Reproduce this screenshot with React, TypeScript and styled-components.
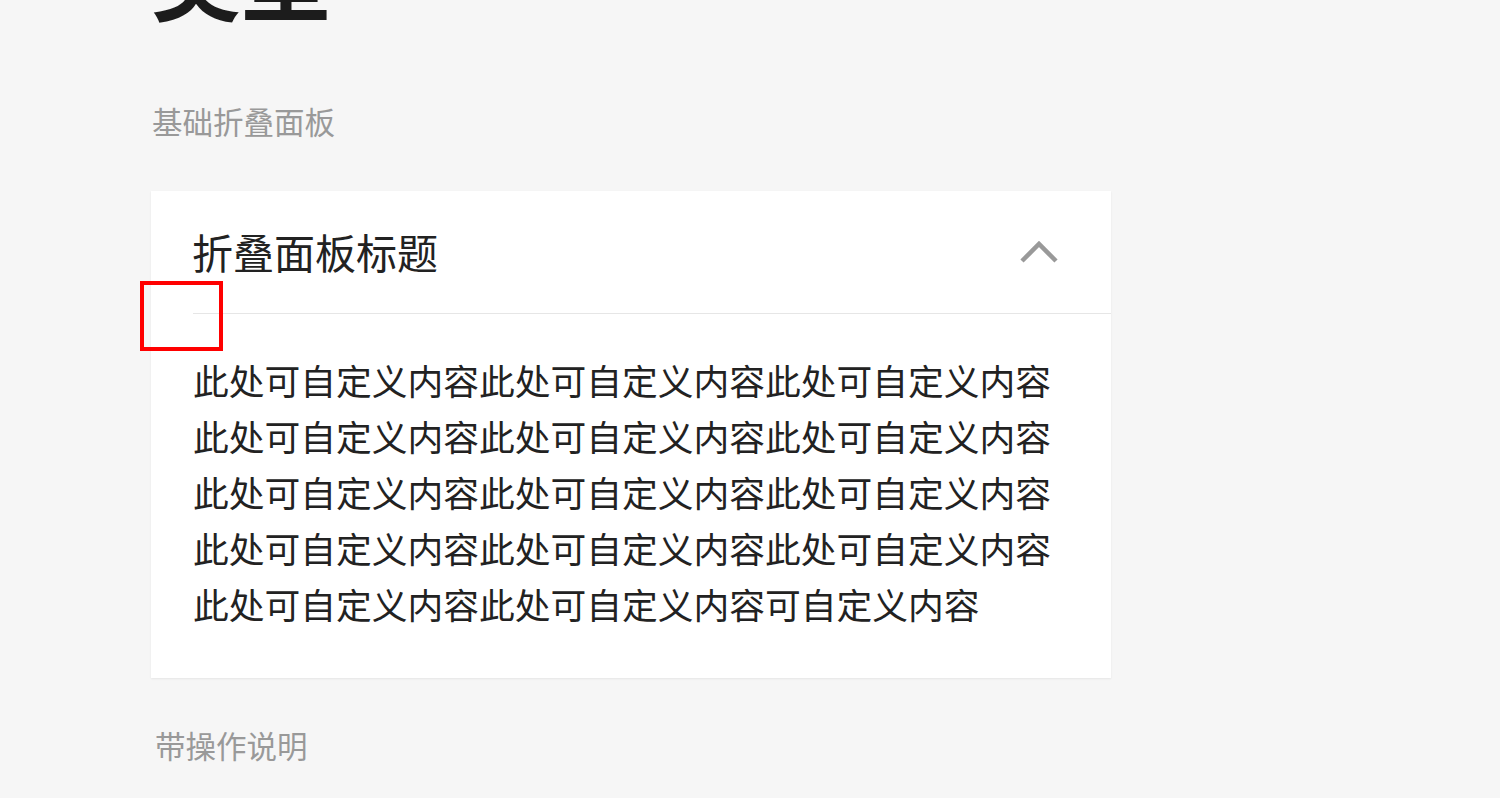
import * as React from 'react';
import styled, { createGlobalStyle } from 'styled-components';

const GlobalStyle = createGlobalStyle`
  html, body {
    margin: 0;
    padding: 0;
    background: #f6f6f6;
    font-family: "Noto Sans CJK SC", "Noto Sans", sans-serif;
  }
`;

const Page = styled.div`
  padding: 0 389px 0 151px;
  overflow: hidden;
  height: 798px;
  box-sizing: border-box;
`;

const PageTitle = styled.h1`
  margin: -70px 0 0;
  font-size: 90px;
  line-height: 1;
  font-weight: 700;
  color: #1c1c1c;
`;

const SectionLabel = styled.div<{ $top: number }>`
  margin-top: ${(p) => p.$top}px;
  padding-left: 1px;
  font-size: 30.5px;
  line-height: 1;
  color: #999999;
`;

const Card = styled.div`
  position: relative;
  margin-top: 54px;
  background: #ffffff;
  box-shadow: 0 1px 2px rgba(0, 0, 0, 0.07);
`;

const Header = styled.div`
  height: 122px;
  display: flex;
  align-items: center;
  justify-content: space-between;
  padding: 0 48px 0 41px;
`;

const HeaderTitle = styled.span`
  font-size: 41px;
  line-height: 1;
  color: #222222;
`;

const Divider = styled.div`
  height: 1px;
  margin-left: 42px;
  background: #e6e6e6;
`;

const Body = styled.div`
  padding: 38px 42px 46px;
  font-size: 35.75px;
  line-height: 56px;
  color: #222222;
  word-break: break-all;
`;

const Highlight = styled.div`
  position: absolute;
  left: -11px;
  top: 90px;
  width: 83px;
  height: 70px;
  box-sizing: border-box;
  border: 4px solid #ff0000;
  pointer-events: none;
`;

const Chevron = () => (
  <svg width="48" height="48" viewBox="0 0 48 48">
    <polyline
      points="7,33 24,16 41,33"
      fill="none"
      stroke="#999999"
      strokeWidth="4.5"
    />
  </svg>
);

const unit = '此处可自定义内容';
const content = unit.repeat(14) + '可自定义内容';

export default function App() {
  return (
    <>
      <GlobalStyle />
      <Page>
        <PageTitle>类型</PageTitle>
        <SectionLabel $top={86}>基础折叠面板</SectionLabel>
        <Card>
          <Header>
            <HeaderTitle>折叠面板标题</HeaderTitle>
            <Chevron />
          </Header>
          <Divider />
          <Body>{content}</Body>
          <Highlight />
        </Card>
        <SectionLabel $top={52}>
          <span style={{ paddingLeft: 3 }}>带操作说明</span>
        </SectionLabel>
      </Page>
    </>
  );
}
